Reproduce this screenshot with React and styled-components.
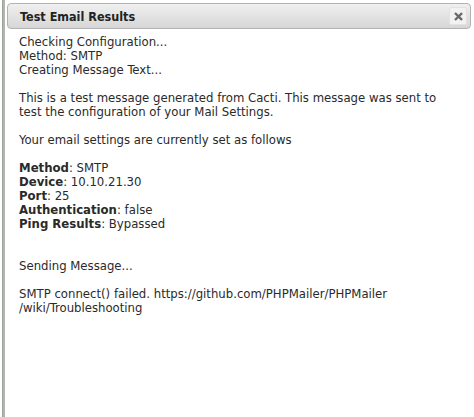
import React from 'react';
import styled, { createGlobalStyle } from 'styled-components';

const GlobalStyle = createGlobalStyle`
    html, body {
        margin: 0;
        padding: 0;
        background: #ffffff;
    }
    body {
        font-family: 'DejaVu Sans Condensed', 'DejaVu Sans', Verdana, sans-serif;
    }
`;

const Page = styled.div`
    display: flex;
    width: 474px;
    height: 417px;
    overflow: hidden;
    background: #ffffff;
`;

const Edge = styled.div`
    width: 2px;
    margin-left: 2px;
    background: #b4b4b4;
    border-left: 1px solid #9aa89a;
`;

const Dialog = styled.div`
    flex: 1;
    display: flex;
    flex-direction: column;
    padding: 3px 3px 0 2px;
`;

const TitleBar = styled.div`
    display: flex;
    align-items: center;
    justify-content: space-between;
    height: 24px;
    padding: 0 3px 0 12px;
    border: 1px solid #b2b2b2;
    border-radius: 4px;
    background: linear-gradient(#f0f0f0, #d6d6d6);
`;

const Title = styled.span`
    font-weight: bold;
    font-size: 12.5px;
    color: #222222;
`;

const CloseButton = styled.button`
    display: flex;
    align-items: center;
    justify-content: center;
    width: 18px;
    height: 18px;
    padding: 0;
    border: 1px solid #e2e2e2;
    border-radius: 2px;
    background: #f2f2f2;
    color: #6a6a6a;
    cursor: pointer;
`;

const Content = styled.div`
    padding: 6px 0 0 12px;
    font-size: 13px;
    line-height: 14px;
    color: #2a2a2a;
`;

const Line = styled.div`
    min-height: 14px;
    white-space: pre;
`;

const Label = styled.b`
    font-weight: bold;
`;

const CloseIcon = () => (
    <svg width="9" height="9" viewBox="0 0 10 10" aria-hidden="true">
        <path d="M2 2 L8 8 M8 2 L2 8" stroke="currentColor" strokeWidth="2.6" strokeLinecap="square" />
    </svg>
);

const settings = [
    ['Method', 'SMTP'],
    ['Device', '10.10.21.30'],
    ['Port', '25'],
    ['Authentication', 'false'],
    ['Ping Results', 'Bypassed'],
];

export default function App() {
    return (
        <Page>
            <GlobalStyle />
            <Edge />
            <Dialog>
                <TitleBar>
                    <Title>Test Email Results</Title>
                    <CloseButton aria-label="Close">
                        <CloseIcon />
                    </CloseButton>
                </TitleBar>
                <Content>
                    <Line>Checking Configuration...</Line>
                    <Line>Method: SMTP</Line>
                    <Line>Creating Message Text...</Line>
                    <Line />
                    <Line>This is a test message generated from Cacti. This message was sent to</Line>
                    <Line>test the configuration of your Mail Settings.</Line>
                    <Line />
                    <Line>Your email settings are currently set as follows</Line>
                    <Line />
                    {settings.map(([k, v]) => (
                        <Line key={k}>
                            <Label>{k}</Label>: {v}
                        </Line>
                    ))}
                    <Line />
                    <Line />
                    <Line>Sending Message...</Line>
                    <Line />
                    <Line>SMTP connect() failed. https://github.com/PHPMailer/PHPMailer</Line>
                    <Line>/wiki/Troubleshooting</Line>
                </Content>
            </Dialog>
        </Page>
    );
}
